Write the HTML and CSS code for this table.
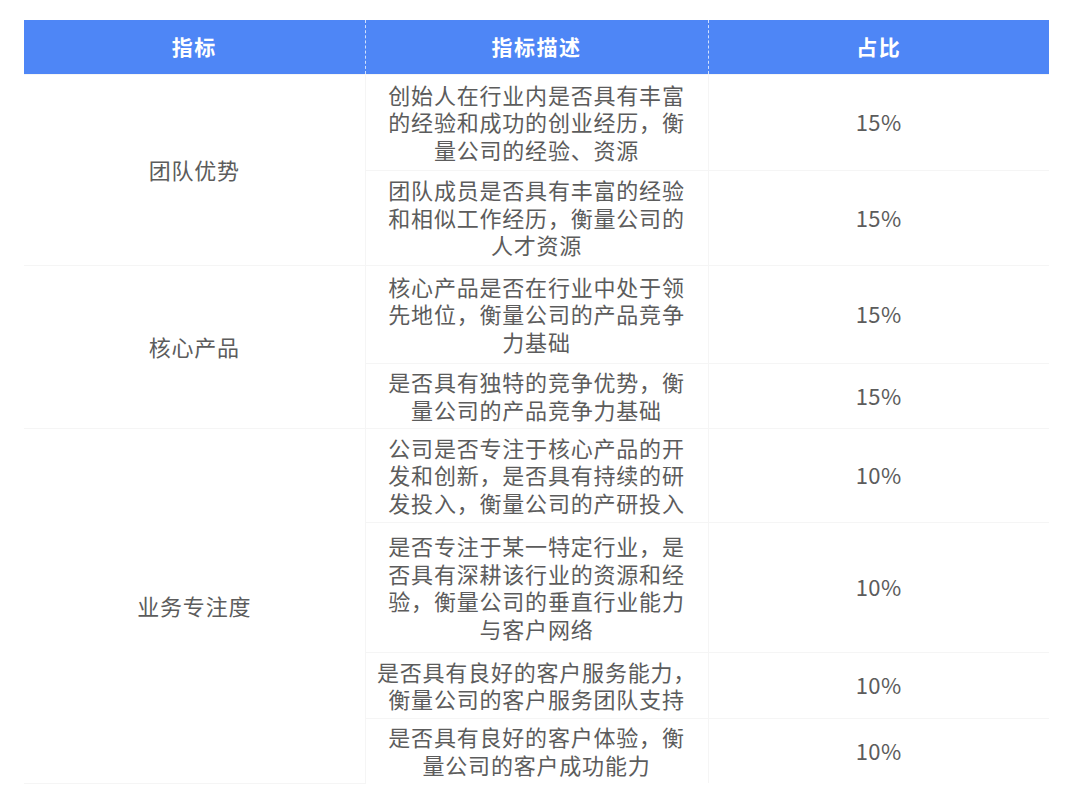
FILE: index.html
```html
<!DOCTYPE html>
<html lang="zh">
<head>
<meta charset="utf-8">
<link rel="stylesheet" href="styles.css">
</head>
<body>
<table class="tbl">
  <colgroup>
    <col class="c1"><col class="c2"><col class="c3">
  </colgroup>
  <thead>
    <tr class="head">
      <th class="sep">指标</th>
      <th class="sep">指标描述</th>
      <th>占比</th>
    </tr>
  </thead>
  <tbody>
    <tr class="r1">
      <td class="name" rowspan="2">团队优势</td>
      <td class="desc">创始人在行业内是否具有丰富<br>的经验和成功的创业经历，衡<br>量公司的经验、资源</td>
      <td class="pct">15%</td>
    </tr>
    <tr class="r2">
      <td class="desc">团队成员是否具有丰富的经验<br>和相似工作经历，衡量公司的<br>人才资源</td>
      <td class="pct">15%</td>
    </tr>
    <tr class="r3">
      <td class="name" rowspan="2">核心产品</td>
      <td class="desc">核心产品是否在行业中处于领<br>先地位，衡量公司的产品竞争<br>力基础</td>
      <td class="pct">15%</td>
    </tr>
    <tr class="r4">
      <td class="desc">是否具有独特的竞争优势，衡<br>量公司的产品竞争力基础</td>
      <td class="pct">15%</td>
    </tr>
    <tr class="r5">
      <td class="name" rowspan="4">业务专注度</td>
      <td class="desc">公司是否专注于核心产品的开<br>发和创新，是否具有持续的研<br>发投入，衡量公司的产研投入</td>
      <td class="pct">10%</td>
    </tr>
    <tr class="r6">
      <td class="desc">是否专注于某一特定行业，是<br>否具有深耕该行业的资源和经<br>验，衡量公司的垂直行业能力<br>与客户网络</td>
      <td class="pct">10%</td>
    </tr>
    <tr class="r7">
      <td class="desc">是否具有良好的客户服务能力，<br>衡量公司的客户服务团队支持</td>
      <td class="pct">10%</td>
    </tr>
    <tr class="r8">
      <td class="desc">是否具有良好的客户体验，衡<br>量公司的客户成功能力</td>
      <td class="pct">10%</td>
    </tr>
  </tbody>
</table>
</body>
</html>
```
FILE: styles.css
```css
html, body {
  margin: 0;
  padding: 0;
  background: #ffffff;
}
body {
  padding: 20px 0 0 24px;
  font-family: "Noto Sans CJK SC", "Noto Sans", sans-serif;
}
.tbl {
  border-collapse: collapse;
  table-layout: fixed;
  width: 1025px;
}
.c1 { width: 341px; }
.c2 { width: 343px; }
.c3 { width: 341px; }
.head {
  height: 54px;
  background: #4e86f6;
}
.head th {
  color: #ffffff;
  font-size: 21px;
  font-weight: 700;
  letter-spacing: 1.5px;
  text-align: center;
  padding: 0;
  line-height: 1;
}
.head th.sep {
  border-right: 1px dashed rgba(255, 255, 255, 0.75);
}
td {
  padding: 0 8px;
  text-align: center;
  vertical-align: middle;
  color: #5c5c5c;
  font-size: 22px;
  letter-spacing: 0.8px;
  line-height: 27.5px;
  border: 1px solid #f5f5f5;
  white-space: nowrap;
}
tbody tr td:first-child { border-left: none; }
tbody tr td.pct { border-right: none; }
.r8 td { border-bottom: none; }
.name { border-bottom: 1px solid #f5f5f5; }
.pct { letter-spacing: 0.5px; }
.r1 { height: 96px; }
.r2 { height: 95px; }
.r3 { height: 98px; }
.r4 { height: 65px; }
.r5 { height: 94px; }
.r6 { height: 130px; }
.r7 { height: 66px; }
.r8 { height: 65px; }
```
